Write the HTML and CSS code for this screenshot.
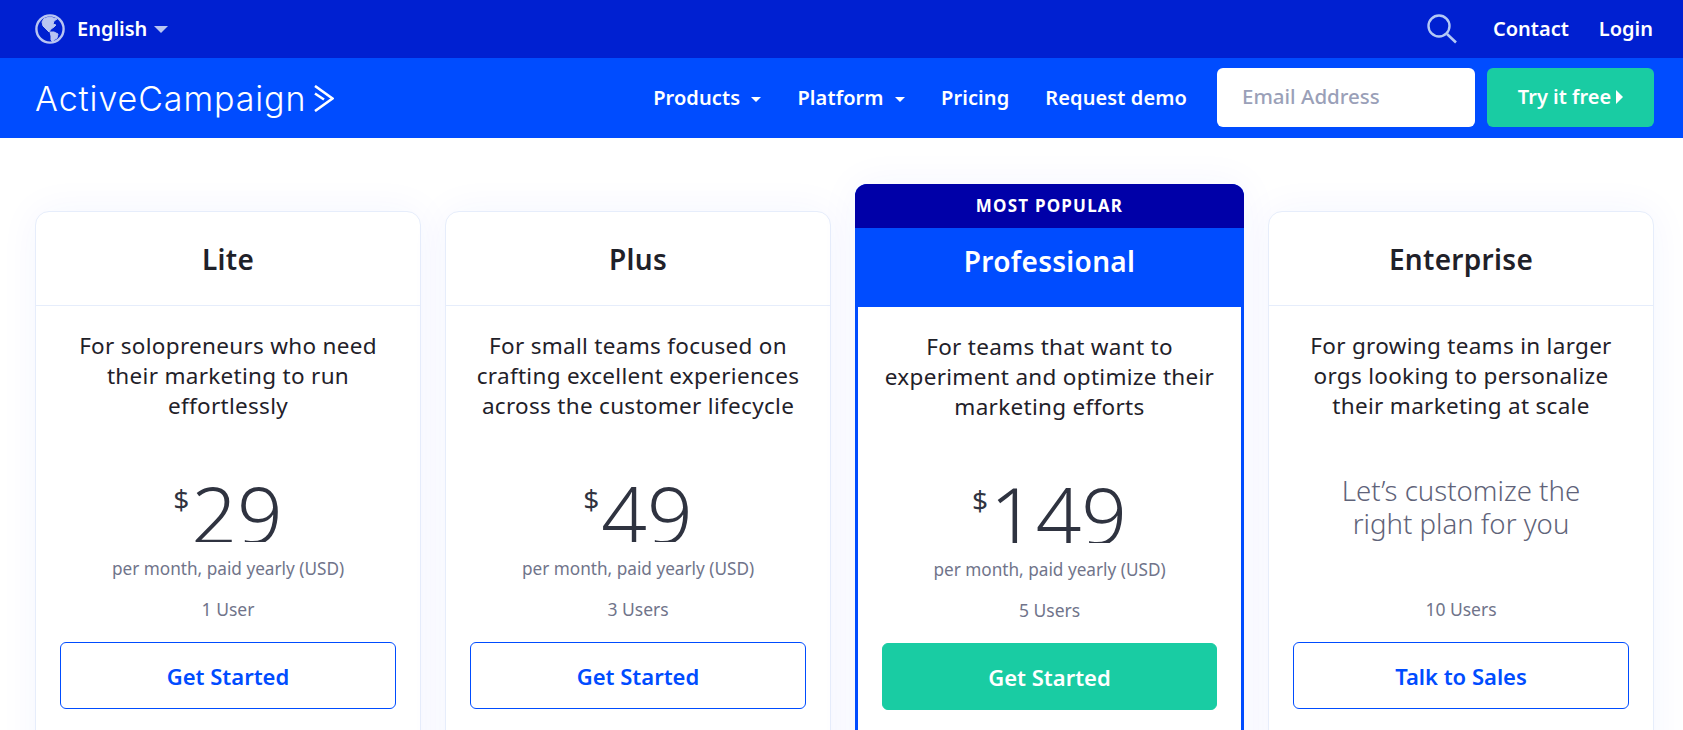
FILE: index.html
```html
<!DOCTYPE html>
<html lang="en">
<head>
    <meta charset="UTF-8">
    <meta name="viewport" content="width=device-width, initial-scale=1.0">
    <title>ActiveCampaign Pricing</title>
    <link rel="stylesheet" href="styles.css">
</head>
<body>
    <div class="topbar">
        <div class="lang">
            <svg class="globe" viewBox="0 0 30 30" width="30" height="30">
                <circle cx="15" cy="15" r="13.6" fill="none" stroke="#b9c5f2" stroke-width="2.4"/>
                <path d="M9 4.5l6-1.5 7 2-3 2-1 3 3 1-2 2-3 2-2 3-3-3-3-3-1-4z" fill="#b9c5f2" stroke="#b9c5f2" stroke-linejoin="round"/>
                <path d="M15 18l4 0 4 2-1 4-3 2-1 2-2-2 0-4z" fill="#b9c5f2" stroke="#b9c5f2" stroke-linejoin="round"/>
            </svg>
            <span class="lang-name">English</span>
            <span class="caret-lang"></span>
        </div>
        <div class="top-links">
            <svg class="search" viewBox="0 0 30 30" width="30" height="30">
                <circle cx="12" cy="12" r="10.5" fill="none" stroke="#b3c8f5" stroke-width="2.4"/>
                <path d="M20 20l9 8.5" stroke="#b3c8f5" stroke-width="2.6"/>
            </svg>
            <a class="contact">Contact</a>
            <a class="login">Login</a>
        </div>
    </div>
    <div class="navbar">
        <div class="logo">
            <span class="logo-text">ActiveCampaign</span>
            <svg class="logo-mark" viewBox="0 0 20 27" width="20" height="27">
                <path d="M1 1L18.5 13.5 1 26" fill="none" stroke="#fff" stroke-width="2.6"/>
                <path d="M1 8.5L10 14.5" fill="none" stroke="#fff" stroke-width="2.6"/>
            </svg>
        </div>
        <div class="nav-links">
            <a>Products <span class="caret"></span></a>
            <a>Platform <span class="caret"></span></a>
            <a>Pricing</a>
            <a>Request demo</a>
        </div>
        <div class="signup">
            <div class="email">Email Address</div>
            <div class="try">Try it free <span class="arrow"></span></div>
        </div>
    </div>

    <div class="plans">
        <div class="plan">
            <div class="plan-head">Lite</div>
            <div class="plan-body">
                <p class="desc">For solopreneurs who need<br>their marketing to run<br>effortlessly</p>
                <div class="price"><sup>$</sup>29</div>
                <div class="per">per month, paid yearly (USD)</div>
                <div class="users">1 User</div>
                <a class="btn">Get Started</a>
            </div>
        </div>
        <div class="plan">
            <div class="plan-head">Plus</div>
            <div class="plan-body">
                <p class="desc">For small teams focused on<br>crafting excellent experiences<br>across the customer lifecycle</p>
                <div class="price"><sup>$</sup>49</div>
                <div class="per">per month, paid yearly (USD)</div>
                <div class="users">3 Users</div>
                <a class="btn">Get Started</a>
            </div>
        </div>
        <div class="plan popular">
            <div class="badge">MOST POPULAR</div>
            <div class="plan-head">Professional</div>
            <div class="plan-body">
                <p class="desc">For teams that want to<br>experiment and optimize their<br>marketing efforts</p>
                <div class="price"><sup>$</sup>149</div>
                <div class="per">per month, paid yearly (USD)</div>
                <div class="users">5 Users</div>
                <a class="btn btn-green">Get Started</a>
            </div>
        </div>
        <div class="plan">
            <div class="plan-head">Enterprise</div>
            <div class="plan-body">
                <p class="desc">For growing teams in larger<br>orgs looking to personalize<br>their marketing at scale</p>
                <div class="custom">Let’s customize the<br>right plan for you</div>
                <div class="users">10 Users</div>
                <a class="btn">Talk to Sales</a>
            </div>
        </div>
    </div>
</body>
</html>
```

FILE: styles.css
```css
html, body {
    height: 100%;
    margin: 0;
    overflow: hidden;
    background: #fff;
    font-family: "Noto Sans", Arial, sans-serif;
}

/* top strip */
.topbar {
    height: 58px;
    background: #0020d1;
    color: #fff;
    display: flex;
    justify-content: space-between;
    align-items: center;
    padding: 0 30px 0 35px;
    font-size: 20px;
    font-weight: 600;
}
.lang, .top-links {
    display: flex;
    align-items: center;
}
.lang-name, .contact, .login {
    padding-bottom: 2px;
}
.globe {
    margin-right: 12px;
}
.caret-lang {
    margin-left: 7px;
    width: 0;
    height: 0;
    border-style: solid;
    border-width: 7px 7px 0;
    border-color: #b9c5f2 transparent transparent;
}
.search {
    margin-right: 36px;
}
.contact {
    margin-right: 30px;
}

/* main nav */
.navbar {
    height: 80px;
    background: #004cff;
    color: #fff;
    display: flex;
    align-items: center;
    padding: 0 29px 0 35px;
}
.logo {
    display: flex;
    align-items: center;
    gap: 8px;
}
.logo-text {
    font-family: Inter, sans-serif;
    font-weight: 350;
    font-size: 34px;
    letter-spacing: 0.9px;
}
.nav-links {
    margin-left: auto;
    display: flex;
    gap: 36px;
    padding-bottom: 2px;
    font-size: 20px;
    font-weight: 600;
    letter-spacing: 0.1px;
}
.caret {
    display: inline-block;
    vertical-align: middle;
    margin-left: 6px;
    width: 0;
    height: 0;
    border-style: solid;
    border-width: 5.5px 5.5px 0;
    border-color: #fff transparent transparent;
}
.signup {
    display: flex;
    gap: 12px;
    margin-left: 30px;
    margin-bottom: 1px;
}
.email {
    width: 258px;
    height: 59px;
    box-sizing: border-box;
    padding-left: 25px;
    line-height: 56px;
    background: #fff;
    border-radius: 6px;
    color: #9aa0b8;
    font-size: 20.5px;
    font-weight: 500;
}
.try {
    width: 167px;
    height: 59px;
    padding-bottom: 2px;
    box-sizing: border-box;
    display: flex;
    justify-content: center;
    align-items: center;
    background: #19cca3;
    border-radius: 6px;
    font-size: 20px;
    font-weight: 600;
}
.arrow {
    margin-left: 5px;
    width: 0;
    height: 0;
    border-style: solid;
    border-width: 7px 0 7px 7px;
    border-color: transparent transparent transparent #fff;
}

/* pricing cards */
.plans {
    display: flex;
    align-items: flex-start;
    gap: 24px;
    padding: 46px 28px 0 35px;
}
.plan {
    width: 386px;
    height: 620px;
    box-sizing: border-box;
    margin-top: 27px;
    background: #fff;
    border: 1px solid #e6edfb;
    border-radius: 14px;
    box-shadow: 0 0 40px rgba(0, 60, 255, 0.05);
}
.plan-head {
    height: 94px;
    box-sizing: border-box;
    border-bottom: 1px solid #e6edfb;
    text-align: center;
    font-size: 28px;
    font-weight: 600;
    letter-spacing: 0.3px;
    line-height: 95px;
    color: #1f2129;
}
.plan-body {
    padding: 25px 24px 0;
    text-align: center;
}
.desc {
    height: 139px;
    margin: 0;
    font-size: 22.5px;
    letter-spacing: 0.3px;
    line-height: 30px;
    color: #1f2129;
}
.price {
    height: 72px;
    overflow: hidden;
    font-size: 80px;
    font-weight: 350;
    line-height: 86px;
    color: #2f3340;
}
.price sup {
    font-size: 28px;
    font-weight: 400;
    vertical-align: 34px;
    line-height: 0;
    margin-right: 2px;
}
.per, .users {
    line-height: 24px;
    color: #70748a;
}
.per {
    margin-top: 15px;
    font-size: 17.2px;
}
.users {
    margin-top: 16px;
    font-size: 17.5px;
}
.custom {
    height: 107px;
    padding-top: 4px;
    font-size: 27.6px;
    line-height: 33px;
    font-weight: 300;
    color: #5f6379;
}
.btn {
    display: block;
    margin-top: 21px;
    height: 67px;
    box-sizing: border-box;
    border: 1px solid #004cff;
    border-radius: 6px;
    text-align: center;
    line-height: 67px;
    font-size: 22px;
    font-weight: 600;
    color: #004cff;
}
.btn-green {
    background: #19cca3;
    border-color: #19cca3;
    color: #fff;
}

/* highlighted card */
.popular {
    width: 389px;
    height: 650px;
    margin-top: 0;
    border: 3px solid #004cff;
    border-radius: 12px 12px 0 0;
}
.badge {
    height: 41px;
    margin: -3px -3px 0;
    padding-top: 3px;
    background: #0000a8;
    border-radius: 12px 12px 0 0;
    color: #fff;
    text-align: center;
    font-size: 17px;
    font-weight: 700;
    letter-spacing: 1.2px;
    line-height: 38px;
}
.popular .plan-head {
    height: 79px;
    background: #004cff;
    border-bottom: 0;
    color: #fff;
    line-height: 66px;
}
```
